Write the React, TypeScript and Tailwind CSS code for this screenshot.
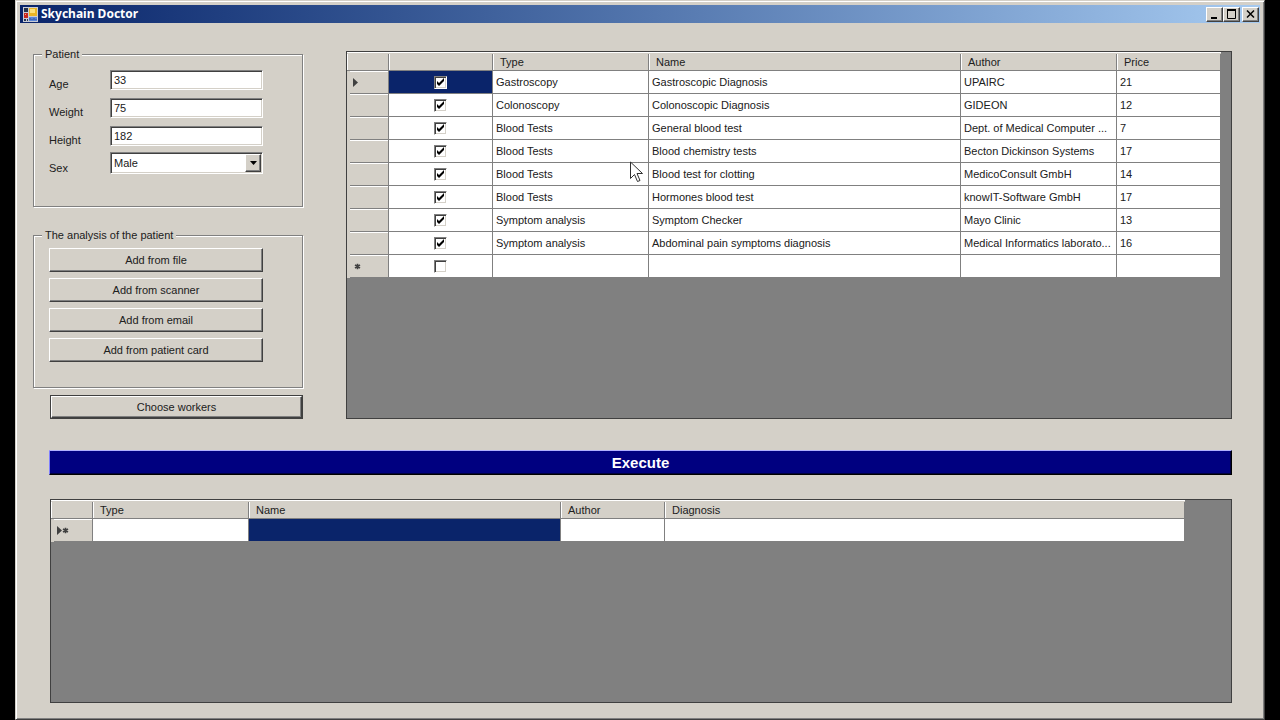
import { useState } from "react";
import type { ReactNode } from "react";

const raised =
  "bg-[#d4d0c8] border border-t-white border-l-white border-r-[#404040] border-b-[#404040] shadow-[inset_-1px_-1px_0_#808080]";
const sunken =
  "bg-white border border-t-[#808080] border-l-[#808080] border-r-white border-b-white shadow-[inset_1px_1px_0_#404040,inset_-1px_-1px_0_#d4d0c8]";

const workers = [
  { type: "Gastroscopy", name: "Gastroscopic Diagnosis", author: "UPAIRC", price: "21" },
  { type: "Colonoscopy", name: "Colonoscopic Diagnosis", author: "GIDEON", price: "12" },
  { type: "Blood Tests", name: "General blood test", author: "Dept. of Medical Computer ...", price: "7" },
  { type: "Blood Tests", name: "Blood chemistry tests", author: "Becton Dickinson Systems", price: "17" },
  { type: "Blood Tests", name: "Blood test for clotting", author: "MedicoConsult GmbH", price: "14" },
  { type: "Blood Tests", name: "Hormones blood test", author: "knowIT-Software GmbH", price: "17" },
  { type: "Symptom analysis", name: "Symptom Checker", author: "Mayo Clinic", price: "13" },
  { type: "Symptom analysis", name: "Abdominal pain symptoms diagnosis", author: "Medical Informatics laborato...", price: "16" },
];

const sources = ["Add from file", "Add from scanner", "Add from email", "Add from patient card"];

function AppIcon() {
  return (
    <svg width="15" height="15" viewBox="0 0 15 15" aria-hidden="true">
      <rect width="15" height="15" fill="#c9ccd6" />
      <rect x="1" y="1" width="4" height="4" fill="#26344f" />
      <rect x="1" y="6" width="4" height="5" fill="#c8281e" />
      <rect x="2" y="7" width="1" height="1" fill="#f0a090" />
      <rect x="1" y="12" width="2" height="2" fill="#26344f" />
      <rect x="4" y="12" width="1" height="2" fill="#26344f" />
      <rect x="6" y="1" width="8" height="8" fill="#e9b526" />
      <rect x="7" y="2" width="5" height="4" fill="#fbe07a" />
      <rect x="6" y="10" width="8" height="4" fill="#5b86d6" />
      <path d="M7 13v-2M9 13v-1M11 13v-2M13 13v-1" stroke="#2b4fa0" />
    </svg>
  );
}

function CaptionButton({ label, children }: { label: string; children: ReactNode }) {
  return (
    <button type="button" aria-label={label} className={`h-[15px] w-[17px] ${raised}`}>
      <svg width="15" height="13" viewBox="0 0 15 13" fill="none" stroke="#000">
        {children}
      </svg>
    </button>
  );
}

function TitleBar() {
  return (
    <header className="flex h-[18px] items-center bg-linear-to-r from-[#0a246a] to-[#a6caf0] pr-px pl-[3px]">
      <AppIcon />
      <h1 className="flex-1 pl-[3px] font-['Noto_Sans',sans-serif] text-[12px] font-bold text-white">
        Skychain Doctor
      </h1>
      <CaptionButton label="Minimize">
        <path d="M4 10h6" strokeWidth="2" />
      </CaptionButton>
      <CaptionButton label="Maximize">
        <path d="M3.5 2v8.5h8V2" />
        <path d="M3 2h9" strokeWidth="2" />
      </CaptionButton>
      <div className="ml-0.5 flex">
        <CaptionButton label="Close">
          <path d="M4 2.5l7 7M11 2.5l-7 7" strokeWidth="1.5" />
        </CaptionButton>
      </div>
    </header>
  );
}

function GroupBox({ title, className, children }: { title: string; className: string; children: ReactNode }) {
  return (
    <fieldset
      className={`border border-[#808080] pr-[39px] pl-[15px] shadow-[inset_1px_1px_0_#fff,1px_1px_0_#fff] ${className}`}
    >
      <legend className="-ml-[7px] bg-[#d4d0c8] px-[3px]">{title}</legend>
      {children}
    </fieldset>
  );
}

function Field({ id, label, value }: { id: string; label: string; value: string }) {
  return (
    <div className="flex items-start justify-between">
      <label htmlFor={id} className="pt-1.5">
        {label}
      </label>
      <input id={id} defaultValue={value} className={`h-5 w-[153px] px-[3px] outline-none ${sunken}`} />
    </div>
  );
}

function PatientBox() {
  return (
    <GroupBox title="Patient" className="pt-2 pb-[30px]">
      <div className="flex flex-col gap-1.5">
        <Field id="age" label="Age" value="33" />
        <Field id="weight" label="Weight" value="75" />
        <Field id="height" label="Height" value="182" />
      </div>
      <div className="mt-1 flex items-start justify-between">
        <label htmlFor="sex" className="pt-2">
          Sex
        </label>
        <div className={`grid h-[22px] w-[153px] ${sunken}`}>
          <select
            id="sex"
            defaultValue="Male"
            className="col-start-1 row-start-1 appearance-none px-[3px] outline-none"
          >
            <option>Male</option>
            <option>Female</option>
          </select>
          <span
            className={`pointer-events-none col-start-1 row-start-1 m-px flex w-4 items-center justify-center justify-self-end ${raised}`}
          >
            <svg width="7" height="4" viewBox="0 0 7 4">
              <path d="M0 0h7L3.500 4z" />
            </svg>
          </span>
        </div>
      </div>
    </GroupBox>
  );
}

function CheckCell({ checked, onChange, label }: { checked: boolean; onChange: () => void; label: string }) {
  return (
    <span className="grid place-items-center">
      <input
        type="checkbox"
        aria-label={label}
        checked={checked}
        onChange={onChange}
        className={`col-start-1 row-start-1 size-[13px] appearance-none ${sunken}`}
      />
      {checked && (
        <svg className="pointer-events-none col-start-1 row-start-1" width="13" height="13" viewBox="0 0 13 13">
          <path d="M3 5v3l2 2 5-5V2L5 7z" />
        </svg>
      )}
    </span>
  );
}

function HeadCell({ children }: { children?: ReactNode }) {
  return (
    <th className="h-[19px] border-t border-b border-t-white border-b-[#808080] bg-[#d4d0c8] p-0 text-left font-normal">
      <div className="h-4 border-r border-l border-r-[#808080] border-l-white pl-1.5">{children}</div>
    </th>
  );
}

function RowHead({ children }: { children?: ReactNode }) {
  return (
    <th className="h-[23px] border-r border-r-[#808080] bg-[#d4d0c8] p-0">
      <div className="ml-[3px] flex h-[23px] items-center border-t border-b border-t-white border-b-[#808080] pl-[3px]">
        {children}
      </div>
    </th>
  );
}

function Cell({ selected, flush, children }: { selected?: boolean; flush?: boolean; children?: ReactNode }) {
  return (
    <td
      className={`h-[23px] truncate border-r border-b border-[#808080] py-0 pr-0 ${flush ? "pl-0" : "pl-[3px]"} ${selected ? "bg-[#0a246a]" : "bg-white"}`}
    >
      {children}
    </td>
  );
}

function Arrow() {
  return (
    <svg width="5" height="9" viewBox="0 0 5 9" fill="#404040" aria-label="Current row">
      <path d="M0 0l5 4.500L0 9z" />
    </svg>
  );
}

function Star() {
  return (
    <svg width="7" height="7" viewBox="0 0 7 7" fill="none" stroke="#404040" strokeWidth="1.6" aria-label="New row">
      <path d="M3.500 .7v5.600M1 2l5 3M6 2L1 5" />
    </svg>
  );
}

function WorkersGrid() {
  const [picked, setPicked] = useState([...workers.map(() => true), false]);
  const toggle = (i: number) => setPicked(picked.map((p, n) => (n === i ? !p : p)));

  return (
    <table className="w-[874px] table-fixed border-separate border-spacing-0">
      <colgroup>
        <col className="w-[42px]" />
        <col className="w-[104px]" />
        <col className="w-[156px]" />
        <col className="w-[312px]" />
        <col className="w-[156px]" />
        <col className="w-[104px]" />
      </colgroup>
      <thead>
        <tr>
          <HeadCell />
          <HeadCell />
          <HeadCell>Type</HeadCell>
          <HeadCell>Name</HeadCell>
          <HeadCell>Author</HeadCell>
          <HeadCell>Price</HeadCell>
        </tr>
      </thead>
      <tbody>
        {workers.map((w, i) => (
          <tr key={w.name}>
            <RowHead>{i === 0 && <Arrow />}</RowHead>
            <Cell selected={i === 0} flush>
              <CheckCell checked={picked[i]} onChange={() => toggle(i)} label={w.name} />
            </Cell>
            <Cell>{w.type}</Cell>
            <Cell>{w.name}</Cell>
            <Cell>{w.author}</Cell>
            <Cell>{w.price}</Cell>
          </tr>
        ))}
        <tr>
          <RowHead>
            <span className="pl-px">
              <Star />
            </span>
          </RowHead>
          <Cell flush>
            <CheckCell checked={picked[8]} onChange={() => toggle(8)} label="New worker" />
          </Cell>
          <Cell />
          <Cell />
          <Cell />
          <Cell />
        </tr>
      </tbody>
    </table>
  );
}

function ResultsGrid() {
  return (
    <table className="w-[1134px] table-fixed border-separate border-spacing-0">
      <colgroup>
        <col className="w-[42px]" />
        <col className="w-[156px]" />
        <col className="w-[312px]" />
        <col className="w-[104px]" />
        <col className="w-[520px]" />
      </colgroup>
      <thead>
        <tr>
          <HeadCell />
          <HeadCell>Type</HeadCell>
          <HeadCell>Name</HeadCell>
          <HeadCell>Author</HeadCell>
          <HeadCell>Diagnosis</HeadCell>
        </tr>
      </thead>
      <tbody>
        <tr>
          <RowHead>
            <Arrow />
            <Star />
          </RowHead>
          <Cell />
          <Cell selected />
          <Cell />
          <Cell />
        </tr>
      </tbody>
    </table>
  );
}

export default function App() {
  return (
    <div className="relative flex min-h-screen bg-black px-[15px] font-['Liberation_Sans',Arial,sans-serif] text-[11px] leading-4 text-[#202020]">
      <div className="flex flex-1 flex-col border border-t-[#d4d0c8] border-r-[#404040] border-b-[#404040] border-l-[#d4d0c8] bg-[#d4d0c8] p-1 shadow-[inset_1px_1px_0_#fff,inset_-1px_-1px_0_#808080]">
        <TitleBar />
        <main className="flex flex-1 flex-col pt-[23px] pr-7 pb-3 pl-[13px]">
          <div className="flex gap-[43px]">
            <div className="flex w-[270px] flex-col">
              <PatientBox />
              <div className="h-5" />
              <GroupBox title="The analysis of the patient" className="pt-[5px] pb-[25px]">
                <div className="flex flex-col gap-1.5">
                  {sources.map((s) => (
                    <button key={s} type="button" className={`h-6 ${raised}`}>
                      {s}
                    </button>
                  ))}
                </div>
              </GroupBox>
              <div className="mt-[7px] ml-[17px] flex border border-[#404040]">
                <button type="button" className={`h-[22px] flex-1 ${raised}`}>
                  Choose workers
                </button>
              </div>
            </div>
            <section className="mt-[5px] min-w-0 flex-1 overflow-hidden border border-[#404040] bg-[#808080]">
              <WorkersGrid />
            </section>
          </div>
          <button
            type="button"
            className="mt-[31px] ml-4 h-[25px] border border-t-[#b0b0ff] border-r-black border-b-black border-l-[#8080ff] bg-[#000080] text-[15px] font-bold text-white shadow-[inset_-1px_-1px_0_#000040]"
          >
            Execute
          </button>
          <section className="mt-6 ml-[17px] min-w-0 flex-1 overflow-hidden border border-[#404040] bg-[#808080]">
            <ResultsGrid />
          </section>
        </main>
      </div>
      <svg
        className="pointer-events-none absolute top-[161px] left-[630px]"
        width="13"
        height="22"
        viewBox="0 0 13 22"
        fill="#fff"
        stroke="#303030"
      >
        <path d="M.5 1v16.500l4-4 3 7 2.500-1-3-7h5.500z" />
      </svg>
    </div>
  );
}
